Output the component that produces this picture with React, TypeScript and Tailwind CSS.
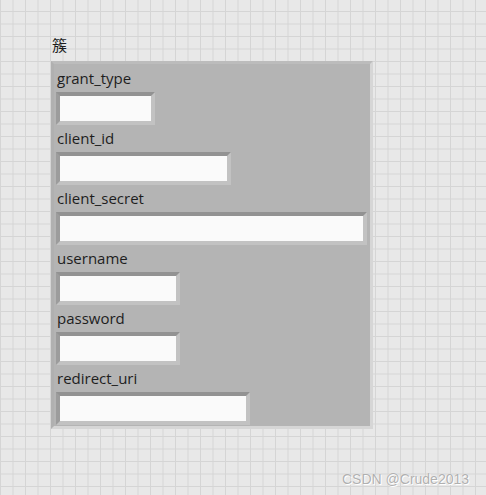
import React from 'react';

const FIELDS = [
  { label: 'grant_type', width: 'w-[99px]' },
  { label: 'client_id', width: 'w-[175px]' },
  { label: 'client_secret', width: 'w-[311px]' },
  { label: 'username', width: 'w-[124px]' },
  { label: 'password', width: 'w-[124px]' },
  { label: 'redirect_uri', width: 'w-[194px]' },
];

export default function App() {
  return (
    <div className="relative w-[486px] h-[495px] overflow-hidden bg-[#e8e8e8] bg-[linear-gradient(to_right,#d5d5d5_1px,transparent_1px),linear-gradient(to_bottom,#d5d5d5_1px,transparent_1px)] bg-[size:12.5px_12.5px] bg-[position:0_11px] font-['Open_Sans','Noto_Sans_CJK_SC',sans-serif] text-[#1e1e1e]">
      <div className="pt-[35px] pl-[52px] text-[15px] leading-[20px] font-['Noto_Sans_CJK_SC',sans-serif]">簇</div>
      {/* cluster */}
      <div className="ml-[51px] mt-[6px] w-[322px] h-[368px] bg-[#b4b4b4] border-[3px] border-t-[#bcbcbc] border-l-[#b0b0b0] border-r-[#d6d6d6] border-b-[#d6d6d6] pl-[2px] pt-[6px]">
        <div className="flex flex-col">
          {FIELDS.map(f => (
            <div key={f.label} className="flex flex-col h-[60px]">
              <div className="pl-[1px] text-[15px] leading-[16px] h-[20px]">{f.label}</div>
              <div className={`mt-[2px] h-[33px] ${f.width} border-4 border-t-[#929292] border-l-[#9c9c9c] border-r-[#c2c2c2] border-b-[#c2c2c2] bg-[#fafafa]`} />
            </div>
          ))}
        </div>
      </div>
      <div className="absolute left-[342px] top-[470px] text-[14px] leading-[18px] font-['Liberation_Sans',sans-serif] text-[#b0b0b0] [text-shadow:0_0_1px_#fff,1px_1px_0_#fff]">
        CSDN @Crude2013
      </div>
    </div>
  );
}
